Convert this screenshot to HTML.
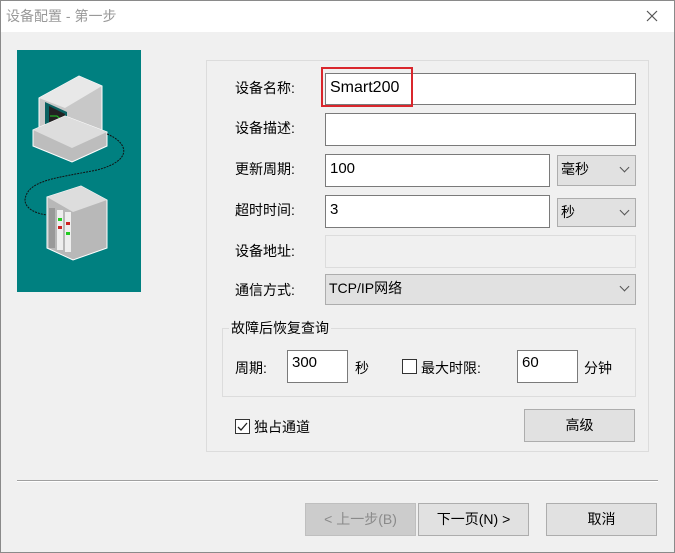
<!DOCTYPE html><html><head><meta charset="utf-8"><style>
*{box-sizing:border-box;margin:0;padding:0}
body{width:675px;height:553px;background:#f0f0f0;font-family:"Liberation Sans","Noto Sans CJK SC",sans-serif;font-size:14px;color:#000;position:relative;overflow:hidden}
.a{position:absolute}
.t{position:absolute;line-height:20px;white-space:nowrap}
.in{position:absolute;background:#fff;border:1px solid #7a7a7a;padding:5px 4px;line-height:18px;font-size:15px}
.sel{position:absolute;background:#e1e1e1;border:1px solid #adadad;padding:4px 3px;line-height:18px}
.sel::after{content:"";position:absolute;right:7px;top:8px;width:6px;height:6px;border-right:1px solid #555;border-bottom:1px solid #555;transform:rotate(45deg)}
.btn{position:absolute;background:#e1e1e1;border:1px solid #adadad;text-align:center;line-height:30px;font-size:14px}
.cb{position:absolute;width:15px;height:15px;border:1px solid #333;background:#fff}
</style></head><body>
<div class="a" style="left:0;top:0;width:675px;height:32px;background:#fff"></div>
<div class="t" style="left:6px;top:6px;color:#999;font-size:14px">设备配置 - 第一步</div>
<svg class="a" style="left:646px;top:10px" width="12" height="12"><path d="M1 1L11 11M11 1L1 11" stroke="#555" stroke-width="1.2"/></svg>
<div class="a" style="left:17px;top:50px;width:124px;height:242px;background:#008080">
<svg width="124" height="242" viewBox="0 0 124 242">
<polygon points="22,48 62,26 85,36 85,88 62,100 22,78" fill="#c8c8c8" stroke="#fff" stroke-width="1"/>
<polygon points="22,48 62,26 85,36 48,58" fill="#e8e8e8"/>
<polygon points="28,52 50,62 50,88 28,78" fill="#0a6060"/>
<polygon points="32,56 48,64 48,82 32,74" fill="#222"/>
<polyline points="33,66 40,66 47,72" stroke="#2c2" fill="none"/>
<polygon points="16,80 48,66 90,82 90,96 55,112 16,96" fill="#bdbdbd" stroke="#fff"/>
<polygon points="16,80 48,66 90,82 55,98" fill="#ddd"/>
<path d="M90 84 C110 92 118 110 80 120 C40 128 10 130 8 150 C8 162 30 168 46 164" stroke="#111" stroke-width="1" fill="none" stroke-dasharray="2 1"/>
<polygon points="30,147 64,136 90,150 90,198 56,210 30,198" fill="#b8b8b8" stroke="#fff"/>
<polygon points="30,147 64,136 90,150 56,162" fill="#ddd"/>
<rect x="32" y="158" width="6" height="40" fill="#999"/><rect x="40" y="160" width="6" height="40" fill="#eee"/><rect x="48" y="162" width="6" height="40" fill="#eee"/>
<rect x="41" y="168" width="4" height="3" fill="#2c2"/><rect x="41" y="176" width="4" height="3" fill="#c22"/><rect x="49" y="172" width="4" height="3" fill="#c22"/><rect x="49" y="182" width="4" height="3" fill="#2c2"/>
</svg></div>
<div class="a" style="left:206px;top:60px;width:443px;height:392px;border:1px solid #dcdcdc"></div>
<div class="t" style="left:235px;top:78px">设备名称:</div>
<div class="t" style="left:235px;top:118px">设备描述:</div>
<div class="t" style="left:235px;top:159px">更新周期:</div>
<div class="t" style="left:235px;top:200px">超时时间:</div>
<div class="t" style="left:235px;top:241px">设备地址:</div>
<div class="t" style="left:235px;top:280px">通信方式:</div>
<div class="in" style="left:325px;top:73px;width:311px;height:32px;font-size:16px">Smart200</div>
<div class="a" style="left:321px;top:67px;width:92px;height:40px;border:2px solid #d9262c"></div>
<div class="in" style="left:325px;top:113px;width:311px;height:33px"></div>
<div class="in" style="left:325px;top:154px;width:225px;height:33px">100</div>
<div class="sel" style="left:557px;top:155px;width:79px;height:31px">毫秒</div>
<div class="in" style="left:325px;top:195px;width:225px;height:33px">3</div>
<div class="sel" style="left:557px;top:198px;width:79px;height:29px">秒</div>
<div class="a" style="left:325px;top:235px;width:311px;height:33px;border:1px solid #dcdcdc;background:#f0f0f0"></div>
<div class="sel" style="left:325px;top:274px;width:311px;height:31px">TCP/IP网络</div>
<div class="a" style="left:222px;top:328px;width:414px;height:69px;border:1px solid #dcdcdc"></div>
<div class="t" style="left:229px;top:318px;background:#f0f0f0;padding:0 2px">故障后恢复查询</div>
<div class="t" style="left:235px;top:358px">周期:</div>
<div class="in" style="left:287px;top:350px;width:61px;height:33px;padding-top:3px">300</div>
<div class="t" style="left:355px;top:358px">秒</div>
<div class="cb" style="left:402px;top:359px"></div>
<div class="t" style="left:421px;top:358px">最大时限:</div>
<div class="in" style="left:517px;top:350px;width:61px;height:33px;padding-top:3px">60</div>
<div class="t" style="left:584px;top:358px">分钟</div>
<div class="cb" style="left:235px;top:419px"></div>
<svg class="a" style="left:236px;top:420px" width="13" height="13"><path d="M2 7L5 10L11 3" stroke="#222" stroke-width="1.3" fill="none"/></svg>
<div class="t" style="left:254px;top:417px">独占通道</div>
<div class="btn" style="left:524px;top:409px;width:111px;height:33px">高级</div>
<div class="a" style="left:17px;top:480px;width:641px;height:2px;border-top:1px solid #a0a0a0;border-bottom:1px solid #fff"></div>
<div class="btn" style="left:305px;top:503px;width:111px;height:33px;background:#cccccc;border-color:#bfbfbf;color:#8a8a8a">&lt; 上一步(B)</div>
<div class="btn" style="left:418px;top:503px;width:111px;height:33px">下一页(N) &gt;</div>
<div class="btn" style="left:546px;top:503px;width:111px;height:33px">取消</div>
<div class="a" style="left:0;top:0;width:675px;height:553px;border:1px solid #8a8a8a;pointer-events:none"></div>
</body></html>
